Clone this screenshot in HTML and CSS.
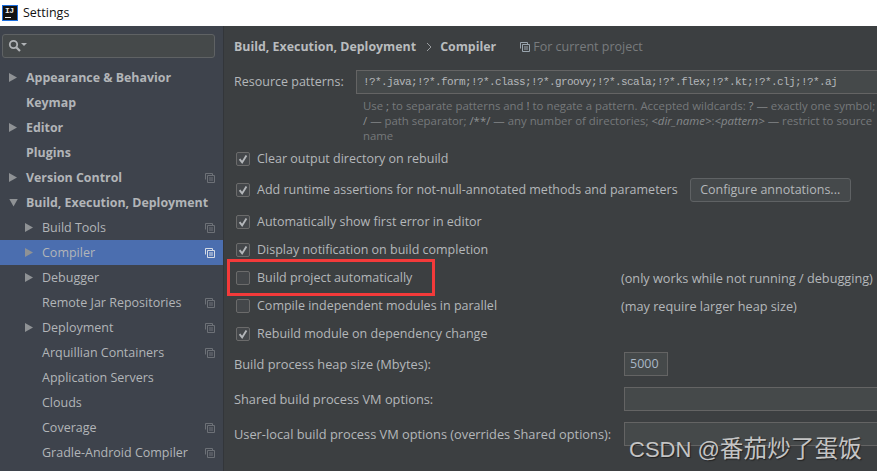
FILE: index.html
```html
<!DOCTYPE html>
<html lang="en">
<head>
<meta charset="utf-8">
<title>Settings</title>
<link rel="stylesheet" href="styles.css">
</head>
<body>
<svg class="defs" width="0" height="0" aria-hidden="true">
  <symbol id="copy" viewBox="0 0 10 10">
    <path d="M.5 6.5V.5h7V2M2.5 2.5h7v7h-7zM4 5h4M4 7h4" fill="none" stroke="currentColor"/>
  </symbol>
  <symbol id="check" viewBox="0 0 14 14">
    <path d="M3 7.2 6 11 11 2.8" fill="none" stroke="currentColor" stroke-width="2.2"/>
  </symbol>
</svg>
<div class="window">
  <header class="titlebar">
    <div class="logo"><span>IJ</span><i></i></div>
    <span class="title">Settings</span>
  </header>
  <div class="body">
    <nav class="sidebar">
      <div class="search">
        <svg width="20" height="14" viewBox="0 0 20 14" aria-hidden="true">
          <circle cx="5.500" cy="5.500" r="3.700" fill="none" stroke="#b0b3b6" stroke-width="1.800"/>
          <path d="M8.200 8.200 12 12" stroke="#b0b3b6" stroke-width="2.200"/>
          <path d="M13 4h6l-3 3z" fill="#b0b3b6"/>
        </svg>
      </div>
      <ul class="tree">
        <li class="row top"><i class="arrow"></i><span>Appearance &amp; Behavior</span></li>
        <li class="row top"><i class="noarrow"></i><span>Keymap</span></li>
        <li class="row top"><i class="arrow"></i><span>Editor</span></li>
        <li class="row top"><i class="noarrow"></i><span>Plugins</span></li>
        <li class="row top"><i class="arrow"></i><span>Version Control</span><svg class="scope"><use href="#copy"/></svg></li>
        <li class="row top"><i class="arrow down"></i><span>Build, Execution, Deployment</span></li>
        <li class="row sub"><i class="arrow"></i><span>Build Tools</span><svg class="scope"><use href="#copy"/></svg></li>
        <li class="row sub selected"><i class="arrow"></i><span>Compiler</span><svg class="scope"><use href="#copy"/></svg></li>
        <li class="row sub"><i class="arrow"></i><span>Debugger</span></li>
        <li class="row sub"><i class="noarrow"></i><span>Remote Jar Repositories</span><svg class="scope"><use href="#copy"/></svg></li>
        <li class="row sub"><i class="arrow"></i><span>Deployment</span><svg class="scope"><use href="#copy"/></svg></li>
        <li class="row sub"><i class="noarrow"></i><span>Arquillian Containers</span><svg class="scope"><use href="#copy"/></svg></li>
        <li class="row sub"><i class="noarrow"></i><span>Application Servers</span></li>
        <li class="row sub"><i class="noarrow"></i><span>Clouds</span></li>
        <li class="row sub"><i class="noarrow"></i><span>Coverage</span><svg class="scope"><use href="#copy"/></svg></li>
        <li class="row sub"><i class="noarrow"></i><span>Gradle-Android Compiler</span><svg class="scope"><use href="#copy"/></svg></li>
      </ul>
    </nav>
    <main class="content">
      <div class="crumbs">
        <b>Build, Execution, Deployment</b>
        <svg class="chev" width="6" height="10" viewBox="0 0 6 10" aria-hidden="true"><path d="M1 1l4 4-4 4" fill="none" stroke="#9a9da0"/></svg>
        <b>Compiler</b>
        <svg class="proj" width="10" height="10" aria-hidden="true"><use href="#copy"/></svg>
        <span class="for">For current project</span>
      </div>
      <div class="resource">
        <label class="res-label">Resource patterns:</label>
        <div class="field patterns">!?*.java;!?*.form;!?*.class;!?*.groovy;!?*.scala;!?*.flex;!?*.kt;!?*.clj;!?*.aj</div>
      </div>
      <div class="hint">
        <div>Use <b>;</b> to separate patterns and <b>!</b> to negate a pattern. Accepted wildcards: <b>?</b> — exactly one symbol; <b>*</b></div>
        <div><b>/</b> — path separator; <b>/**/</b> — any number of directories; <em>&lt;dir_name&gt;</em>:<em>&lt;pattern&gt;</em> — restrict to source</div>
        <div>name</div>
      </div>
      <div class="check"><span class="box on"><svg><use href="#check"/></svg></span><span>Clear output directory on rebuild</span></div>
      <div class="check second"><span class="box on"><svg><use href="#check"/></svg></span><span>Add runtime assertions for not-null-annotated methods and parameters</span><button class="btn">Configure annotations...</button></div>
      <div class="check"><span class="box on"><svg><use href="#check"/></svg></span><span>Automatically show first error in editor</span></div>
      <div class="check"><span class="box on"><svg><use href="#check"/></svg></span><span>Display notification on build completion</span></div>
      <div class="check"><span class="box"></span><span class="lbl">Build project automatically</span><span class="note">(only works while not running / debugging)</span></div>
      <div class="check"><span class="box"></span><span class="lbl">Compile independent modules in parallel</span><span class="note">(may require larger heap size)</span></div>
      <div class="check"><span class="box on"><svg><use href="#check"/></svg></span><span>Rebuild module on dependency change</span></div>
      <div class="opt heap"><label>Build process heap size (Mbytes):</label><div class="field small">5000</div></div>
      <div class="opt"><label>Shared build process VM options:</label><div class="field wide"></div></div>
      <div class="opt"><label>User-local build process VM options (overrides Shared options):</label><div class="field wide"></div></div>
    </main>
  </div>
</div>
<div class="redbox"></div>
<div class="watermark">CSDN @<span class="cjk">番茄炒了蛋饭</span></div>
</body>
</html>
```
FILE: styles.css
```css
* { box-sizing: border-box; }
html, body { margin: 0; height: 100%; overflow: hidden; }
body { font: 12.5px/18px "Open Sans", "Noto Sans", "Noto Sans CJK SC", sans-serif; color: #b4b7ba; background: #3c3f41; position: relative; }
.defs { position: absolute; }
.window { display: flex; flex-direction: column; height: 471px; }
.titlebar { height: 26px; background: #fff; display: flex; align-items: center; padding-left: 2px; flex: none; gap: 5px; }
.logo { width: 16px; height: 16px; flex: none; background: #111; border: 1px solid #1d6fe0; display: flex; flex-direction: column; padding-left: 2px; }
.logo span { font: 700 8px/9px "Liberation Mono", monospace; color: #eee; letter-spacing: -.5px; }
.logo i { width: 6px; height: 1px; background: #eee; margin-top: 2px; }
.title { color: #111; }
.body { flex: 1; display: flex; min-height: 0; }

.sidebar { width: 224px; flex: none; background: #3e434c; border-right: 1px solid #33363a; padding-top: 8px; overflow: hidden; }
.search { height: 24px; width: 213px; margin-left: 2px; background: #45494a; border: 1px solid #5f6264; border-radius: 3px; display: flex; align-items: center; padding-left: 5px; }
.tree { list-style: none; margin: 7px 0 0; padding: 0; }
.row { height: 25px; display: flex; align-items: center; padding-right: 8px; white-space: nowrap; color: #b2b5b8; }
.row.top { font-weight: 700; padding-left: 9px; font-size: 12.4px; }
.row.sub { padding-left: 25px; }
.row.selected { background: #4b6eaf; }
.row .scope { margin-left: auto; color: #6d7177; }
.row.selected .scope { color: #d6dce6; }
.scope { width: 10px; height: 10px; flex: none; }
.arrow { width: 8px; height: 9px; margin-right: 9px; flex: none; background: #8f9295; clip-path: polygon(0 0, 100% 50%, 0 100%); }
.arrow.down { clip-path: polygon(0 0, 100% 0, 50% 100%); width: 9px; height: 8px; margin-right: 8px; }
.noarrow { width: 8px; margin-right: 9px; flex: none; }

.content { flex: 1; min-width: 0; padding: 12px 0 0 10px; overflow: hidden; white-space: nowrap; }
.crumbs { height: 18px; display: flex; align-items: center; }
.crumbs b { color: #b9bcbe; font-size: 12.4px; }
.chev { margin: 0 8px 0 10px; }
.proj { margin: 0 3px 0 24px; color: #9aa5ae; }
.for { color: #787b7d; }
.resource { display: flex; align-items: center; margin-top: 14px; }
.res-label { width: 122px; flex: none; }
.field { background: #45494a; border: 1px solid #646464; height: 24px; }
.patterns { flex: 1; margin-right: -2px; border-right: 0; font: 11px/22px "Liberation Mono", "DejaVu Sans Mono", monospace; letter-spacing: -.6px; padding-left: 6px; color: #b4b7ba; }
.hint { margin: 4px 0 2px 129px; color: #76797b; line-height: 15px; font-size: 11.4px; }
.hint b { color: #8d9092; font-weight: 400; }
.hint em { color: #85888a; }
.check { display: flex; align-items: center; height: 28px; padding-left: 2px; }
.check.second { height: 35px; padding-bottom: 1px; }
.box { width: 14px; height: 14px; border: 1px solid #6b6b6b; border-radius: 2px; background: #44474a; margin-right: 7px; flex: none; display: flex; }
.box svg { width: 12px; height: 12px; color: #b4b7ba; }
.lbl { width: 364px; flex: none; }
.note { font-size: 12.7px; }
.btn { margin-left: 12px; height: 24px; width: 161px; padding: 0; background: #45494b; border: 1px solid #5f6264; border-radius: 3px; color: #b4b7ba; font: inherit; }
.opt { display: flex; align-items: center; height: 24px; margin-bottom: 11px; }
.opt.heap { margin-top: 4px; }
.opt label { width: 390px; flex: none; font-size: 12.8px; }
.small { width: 44px; padding-left: 5px; line-height: 22px; color: #a9b7c6; }
.wide { flex: 1; border-right: 0; }

.redbox { position: absolute; left: 227px; top: 259px; width: 208px; height: 37px; border: 3px solid #f33a3a; }
.watermark { position: absolute; left: 629px; top: 435px; font: 22px/28px "Liberation Sans", "Noto Sans CJK SC", sans-serif; color: #c4c4c4; text-shadow: 1px 1px 1px #222; white-space: nowrap; }
.cjk { font-size: 23.7px; }
```
